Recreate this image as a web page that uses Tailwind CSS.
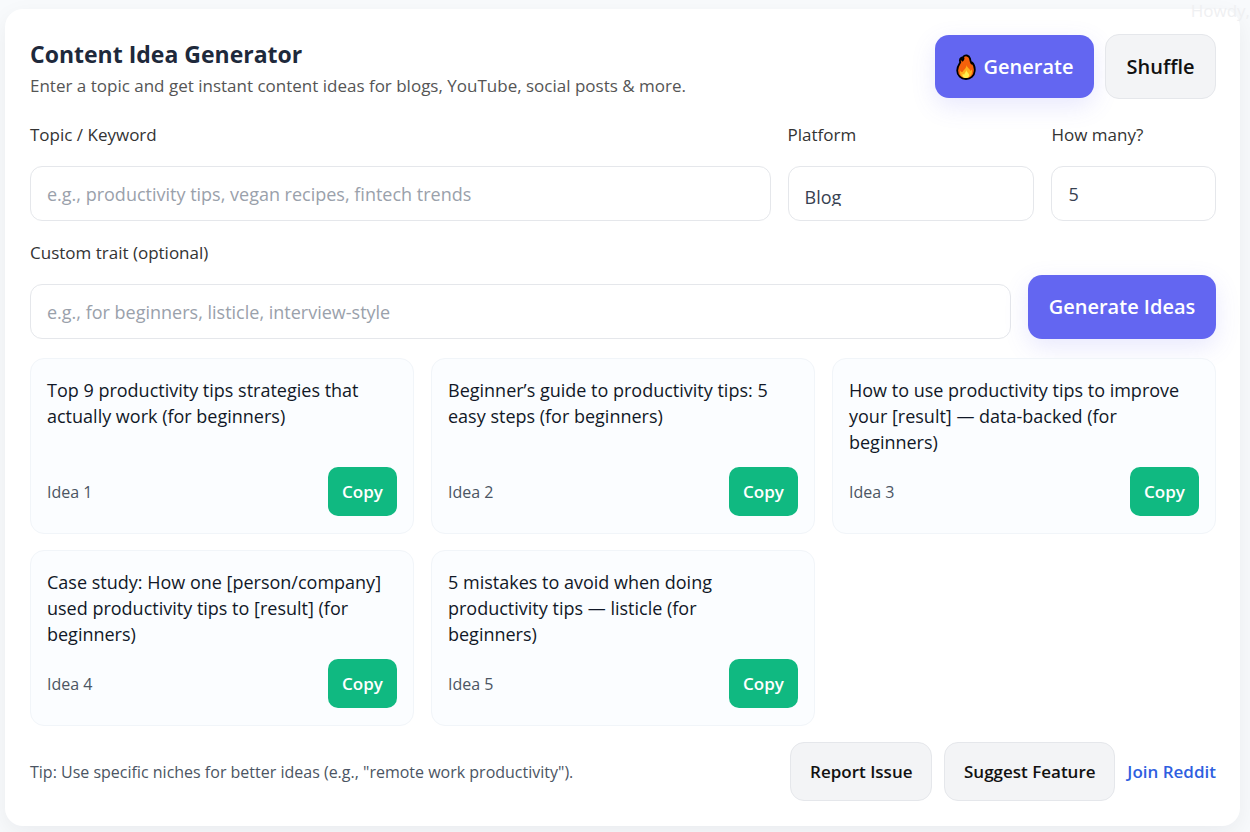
<!DOCTYPE html>
<html lang="en">

<head>
  <meta charset="UTF-8">
  <meta name="viewport" content="width=device-width, initial-scale=1.0">
  <title>Content Idea Generator</title>
  <script src="https://cdn.jsdelivr.net/npm/@tailwindcss/browser@4"></script>
</head>

<body class="relative min-h-screen overflow-x-hidden bg-[#f8fafc] pt-[9px] pr-[10px] pb-[5px] pl-[5px] font-['Segoe_UI','Open_Sans',sans-serif] text-[17px] leading-[26px] text-[#374151]">
  <main class="rounded-[18px] bg-white py-[25px] pr-6 pl-[25px] shadow-[0_8px_24px_rgba(15,23,42,0.06)]">

    <header class="flex items-center justify-between">
      <div class="pt-1">
        <h1 class="text-[23px] leading-[30px] font-bold text-[#1e293b]">Content Idea Generator</h1>
        <p class="mt-1 text-[#555555]">Enter a topic and get instant content ideas for blogs, YouTube, social posts &amp; more.</p>
      </div>
      <div class="flex items-center gap-[11px]">
        <button type="button" class="flex h-[63px] w-[159px] items-center justify-center gap-2 rounded-[14px] bg-[#6366f1] text-[20px] font-semibold text-white shadow-[0_8px_24px_rgba(99,102,241,0.15)]">
          <svg class="h-[26px] w-[20px]" viewBox="0 0 20 26" aria-hidden="true">
            <path d="M7 3C9 .5 13 1 14 4.500C14.500 6.500 14.500 8 15.500 9.500L16 8.500C18.500 11 19 14 18.700 17C18.300 22 14.500 25 10 25C5 25 1.200 21.500 1.200 16.500C1.200 12.500 3 10.500 4.300 8.300C3.600 6.500 4 4.500 5.600 3.600C5.400 5 5.800 6 6.400 6.600C7.500 5.500 7.700 4 7 3Z" fill="#f4610b" stroke="#000" stroke-width="1.800" stroke-linejoin="round" />
            <path d="M10.500 11C11 14 14 14.500 14.500 17L15.800 15.500C17 20 14 24 10 24C5.500 24 3.200 20.500 4.300 16.500C5 17.800 5.800 18.300 6.500 18C7.500 16 10.500 14.500 10.500 11Z" fill="#ffb01c" />
            <path d="M10.300 16C10.500 18 12.300 18.500 13 20.500C13.400 22.500 12 24 10 24C7.500 24 6 22.300 6.700 20L8.200 20.700C8.500 19 10.200 18 10.300 16Z" fill="#fff04d" />
          </svg>
          Generate
        </button>
        <button type="button" class="h-[65px] w-[111px] rounded-[14px] border border-[#e5e7eb] bg-[#f3f4f6] text-[20px] font-semibold text-[#111111]">Shuffle</button>
      </div>
    </header>

    <form>
      <div class="mt-[23px] grid grid-cols-[9fr_3fr_2fr] gap-[17px]">
        <div class="flex min-w-0 flex-col gap-[18px]">
          <label for="topic" class="text-[#333333]">Topic / Keyword</label>
          <input id="topic" type="text" placeholder="e.g., productivity tips, vegan recipes, fintech trends" class="h-[55px] w-full rounded-[12px] border border-[#e5e7eb] bg-white px-4 text-[18px] placeholder:text-[#9aa1ab]">
        </div>
        <div class="flex min-w-0 flex-col gap-[18px]">
          <label for="platform" class="text-[#333333]">Platform</label>
          <select id="platform" class="h-[55px] w-full appearance-none rounded-[12px] border border-[#e5e7eb] bg-white px-4 py-[14px] text-[18px] leading-[32px]">
            <option>Blog</option>
            <option>YouTube</option>
            <option>Social</option>
          </select>
        </div>
        <div class="flex min-w-0 flex-col gap-[18px]">
          <label for="count" class="text-[#333333]">How many?</label>
          <input id="count" type="number" min="1" value="5" class="h-[55px] w-full rounded-[12px] border border-[#e5e7eb] bg-white px-4 text-[18px]">
        </div>
      </div>

      <div class="mt-[19px] flex items-end gap-[17px]">
        <div class="flex min-w-0 flex-1 flex-col gap-[18px]">
          <label for="trait" class="text-[#333333]">Custom trait (optional)</label>
          <input id="trait" type="text" placeholder="e.g., for beginners, listicle, interview-style" class="h-[55px] w-full rounded-[12px] border border-[#e5e7eb] bg-white px-4 text-[18px] placeholder:text-[#9aa1ab]">
        </div>
        <button type="button" class="h-[64px] w-[188px] rounded-[14px] bg-[#6366f1] text-[20px] font-semibold text-white shadow-[0_8px_24px_rgba(99,102,241,0.15)]">Generate Ideas</button>
      </div>
    </form>

    <section class="relative mt-[19px] grid grid-cols-3 gap-x-[17px] gap-y-4">
      <article class="flex h-[176px] flex-col justify-between rounded-[14px] border border-[#f1f5f9] bg-[#fbfdff] px-4 pt-[18px] pb-[17px]">
        <p class="max-w-[340px] text-[18px] text-[#111827]">Top 9 productivity tips strategies that actually work (for beginners)</p>
        <div class="flex items-center justify-between">
          <span class="text-[16px] text-[#4b5563]">Idea 1</span>
          <button type="button" class="h-[49px] w-[69px] rounded-[10px] bg-[#10b981] font-semibold text-white">Copy</button>
        </div>
      </article>
      <article class="flex h-[176px] flex-col justify-between rounded-[14px] border border-[#f1f5f9] bg-[#fbfdff] px-4 pt-[18px] pb-[17px]">
        <p class="max-w-[340px] text-[18px] text-[#111827]">Beginner’s guide to productivity tips: 5 easy steps (for beginners)</p>
        <div class="flex items-center justify-between">
          <span class="text-[16px] text-[#4b5563]">Idea 2</span>
          <button type="button" class="h-[49px] w-[69px] rounded-[10px] bg-[#10b981] font-semibold text-white">Copy</button>
        </div>
      </article>
      <article class="flex h-[176px] flex-col justify-between rounded-[14px] border border-[#f1f5f9] bg-[#fbfdff] px-4 pt-[18px] pb-[17px]">
        <p class="max-w-[340px] text-[18px] text-[#111827]">How to use productivity tips to improve your [result] — data-backed (for beginners)</p>
        <div class="flex items-center justify-between">
          <span class="text-[16px] text-[#4b5563]">Idea 3</span>
          <button type="button" class="h-[49px] w-[69px] rounded-[10px] bg-[#10b981] font-semibold text-white">Copy</button>
        </div>
      </article>
      <article class="flex h-[176px] flex-col justify-between rounded-[14px] border border-[#f1f5f9] bg-[#fbfdff] px-4 pt-[18px] pb-[17px]">
        <p class="max-w-[340px] text-[18px] text-[#111827]">Case study: How one [person/company] used productivity tips to [result] (for beginners)</p>
        <div class="flex items-center justify-between">
          <span class="text-[16px] text-[#4b5563]">Idea 4</span>
          <button type="button" class="h-[49px] w-[69px] rounded-[10px] bg-[#10b981] font-semibold text-white">Copy</button>
        </div>
      </article>
      <article class="flex h-[176px] flex-col justify-between rounded-[14px] border border-[#f1f5f9] bg-[#fbfdff] px-4 pt-[18px] pb-[17px]">
        <p class="max-w-[340px] text-[18px] text-[#111827]">5 mistakes to avoid when doing productivity tips — listicle (for beginners)</p>
        <div class="flex items-center justify-between">
          <span class="text-[16px] text-[#4b5563]">Idea 5</span>
          <button type="button" class="h-[49px] w-[69px] rounded-[10px] bg-[#10b981] font-semibold text-white">Copy</button>
        </div>
      </article>
    </section>

    <footer class="mt-4 flex items-center justify-between">
      <p class="text-[16px] text-[#4b5563]">Tip: Use specific niches for better ideas (e.g., "remote work productivity").</p>
      <div class="flex items-center gap-3 font-semibold">
        <button type="button" class="h-[59px] w-[142px] rounded-[14px] border border-[#e5e7eb] bg-[#f3f4f6] text-[#111111]">Report Issue</button>
        <button type="button" class="h-[59px] w-[171px] rounded-[14px] border border-[#e5e7eb] bg-[#f3f4f6] text-[#111111]">Suggest Feature</button>
        <a href="#" class="text-[#2f5fe0]">Join Reddit</a>
      </div>
    </footer>
  </main>

  <div class="absolute top-0 right-0 leading-[22px] text-[#eff0f2]">Howdy,</div>
</body>

</html>
